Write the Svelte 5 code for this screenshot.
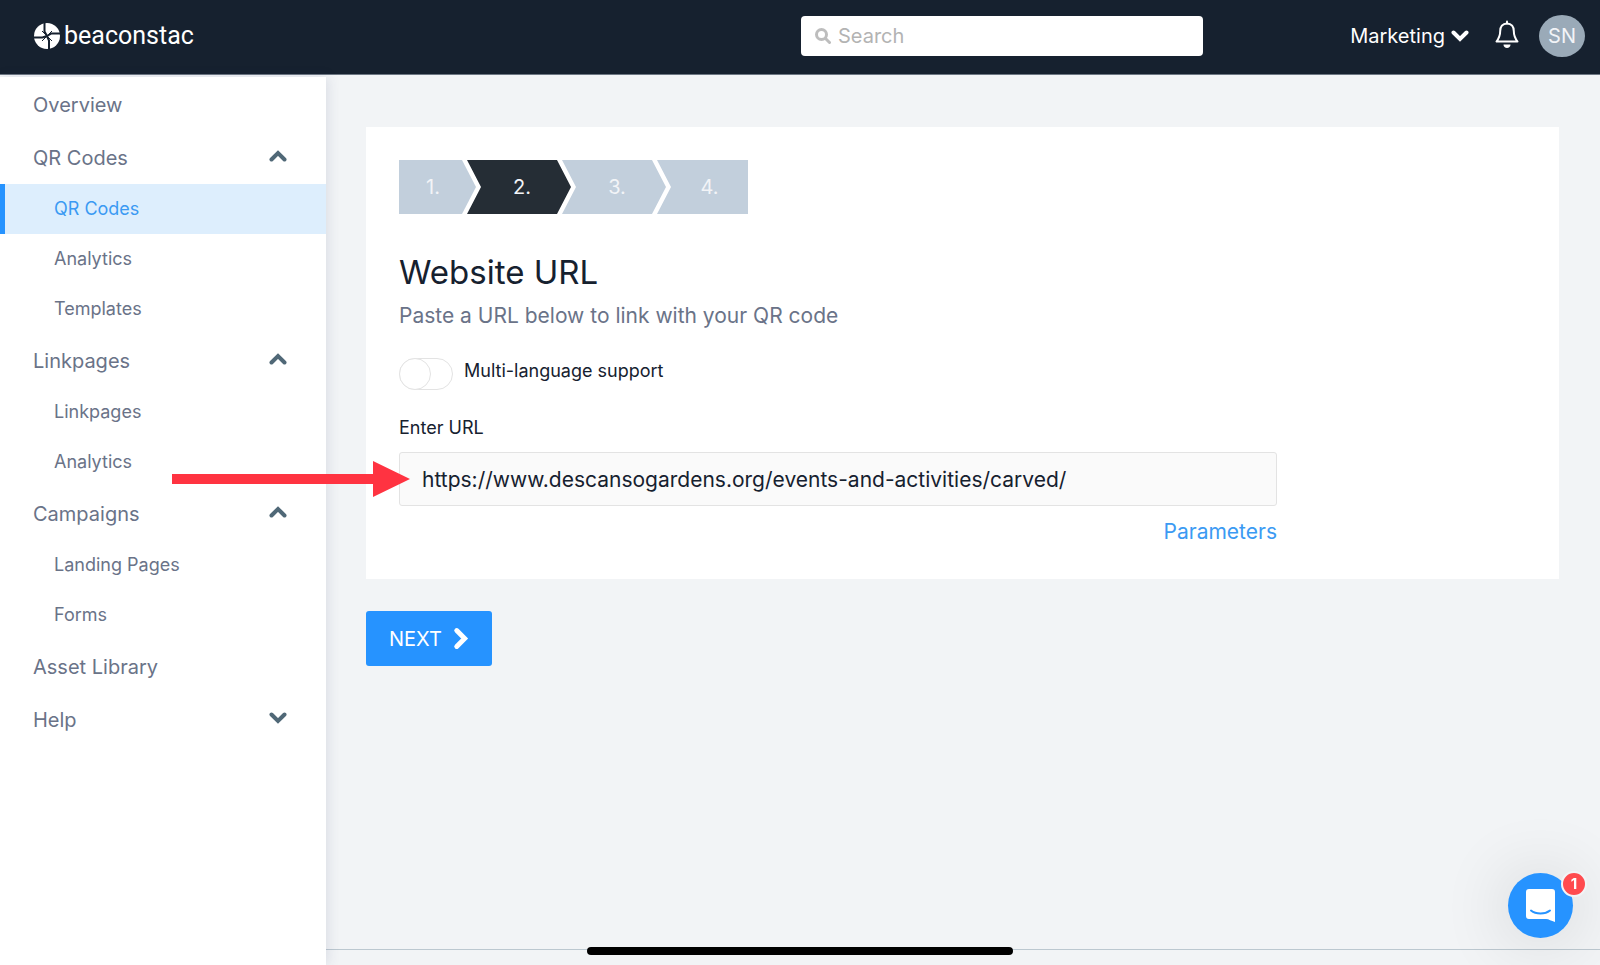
<script lang="ts">
  type Child = { label: string; active?: boolean };
  type Section = { label: string; expandable?: boolean; open?: boolean; children?: Child[] };

  let sections = $state<Section[]>([
    { label: 'Overview' },
    {
      label: 'QR Codes',
      expandable: true,
      open: true,
      children: [{ label: 'QR Codes', active: true }, { label: 'Analytics' }, { label: 'Templates' }]
    },
    { label: 'Linkpages', expandable: true, open: true, children: [{ label: 'Linkpages' }, { label: 'Analytics' }] },
    { label: 'Campaigns', expandable: true, open: true, children: [{ label: 'Landing Pages' }, { label: 'Forms' }] },
    { label: 'Asset Library' },
    { label: 'Help', expandable: true, open: false }
  ]);

  const steps = [1, 2, 3, 4];
  let currentStep = $state(2);
  let search = $state('');
  let multiLanguage = $state(false);
  let url = $state('https://www.descansogardens.org/events-and-activities/carved/');
  let unreadMessages = $state(1);

  function next() {
    currentStep = Math.min(currentStep + 1, steps.length);
  }
</script>

{#snippet chevron(direction: string)}
  <svg class="chevron {direction}" viewBox="0 0 18 12" aria-hidden="true">
    <path d="M2.500 2.500 9 9l6.500-6.500" />
  </svg>
{/snippet}

<div class="app">
  <header class="topbar">
    <a class="logo" href="#home" aria-label="beaconstac">
      <svg viewBox="0 0 26 26" aria-hidden="true">
        <circle cx="13" cy="13" r="13" />
        <path d="M13 13 10.500 8.500V0M13 13l4.500-2.500H26M13 13l2 4.500V26M13 13l-4.500 1.500H0" />
        <path class="thin" d="m8 8 10 10M18 8 8 18" />
      </svg>
      <span>beaconstac</span>
    </a>
    <div class="tools">
      <label class="search">
        <svg viewBox="0 0 16 16" aria-hidden="true">
          <circle cx="6.500" cy="6.500" r="5" />
          <path d="m10.500 10.500 4 4" />
        </svg>
        <input type="search" placeholder="Search" aria-label="Search" bind:value={search} />
      </label>
      <div class="account">
        <button class="workspace">Marketing {@render chevron('down')}</button>
        <button class="bell" aria-label="Notifications">
          <svg viewBox="0 0 24 28" aria-hidden="true">
            <path class="outline" d="M12 3.500c-4.600 0-6.800 3.400-6.800 7.500 0 5.500-1.400 7.500-3.700 10.500h21c-2.300-3-3.700-5-3.700-10.500 0-4.100-2.200-7.500-6.800-7.500Z" />
            <path class="outline" d="M12 1.500v2" />
            <path class="clapper" d="M8.500 24.500h7c0 2-1.500 3.500-3.500 3.500s-3.500-1.500-3.500-3.500Z" />
          </svg>
        </button>
        <button class="avatar" aria-label="Account">SN</button>
      </div>
    </div>
  </header>

  <nav class="sidebar" aria-label="Main">
    {#each sections as section (section.label)}
      {#if section.expandable}
        <button class="item" aria-expanded={section.open} onclick={() => (section.open = !section.open)}>
          {section.label}
          {@render chevron(section.open ? 'up' : 'down')}
        </button>
      {:else}
        <a class="item" href="#{section.label}">{section.label}</a>
      {/if}
      {#if section.open && section.children}
        {#each section.children as child (child.label)}
          <a class="child" class:active={child.active} href="#{section.label}/{child.label}">{child.label}</a>
        {/each}
      {/if}
    {/each}
  </nav>

  <main>
    <section class="card">
      <ol class="steps">
        {#each steps as step (step)}
          <li class:current={step === currentStep} aria-current={step === currentStep ? 'step' : undefined}>{step}.</li>
        {/each}
      </ol>
      <h1>Website URL</h1>
      <p class="lead">Paste a URL below to link with your QR code</p>
      <label class="toggle">
        <input type="checkbox" bind:checked={multiLanguage} />
        <span>Multi-language support</span>
      </label>
      <div class="field">
        <label for="url">Enter URL</label>
        <div class="control">
          <input id="url" type="text" spellcheck="false" bind:value={url} />
          <svg class="pointer" viewBox="0 0 238 36" aria-hidden="true">
            <path d="M0 13h201V0l37 18-37 18V23H0Z" />
          </svg>
        </div>
        <a href="#parameters">Parameters</a>
      </div>
    </section>
    <button class="next" onclick={next}>NEXT {@render chevron('right')}</button>
    <footer></footer>
  </main>

  <button class="chat" aria-label="Open chat" onclick={() => (unreadMessages = 0)}>
    <svg viewBox="0 0 29 33" aria-hidden="true">
      <path class="bubble" d="M3 0h23q3 0 3 3v30c-4-1-6-3-9-3H3q-3 0-3-3V3q0-3 3-3Z" />
      <path class="smile" d="M5 21.500c5 4 14 4 19 0" />
    </svg>
    {#if unreadMessages > 0}<span class="badge">{unreadMessages}</span>{/if}
  </button>
  <div class="home-indicator"></div>
</div>

<style>
  :global(body) { background: #f2f4f6; }
  .app { min-height: 100vh; display: grid; grid-template: 75px 1fr / 326px 1fr; font-family: Inter, "Liberation Sans", sans-serif; font-size: 20px; line-height: 24px; color: #16212f; }
  button, input { font: inherit; color: inherit; }
  button { border: 0; padding: 0; background: none; cursor: pointer; }
  a { color: inherit; text-decoration: none; }

  .chevron { width: 18px; height: 12px; fill: none; stroke: currentColor; stroke-width: 4; stroke-linecap: round; flex: none; }
  .chevron.up { transform: rotate(180deg); }
  .chevron.right { width: 22px; height: 15px; transform: rotate(-90deg); }

  .topbar { grid-column: 1 / -1; display: grid; grid-template-columns: 1fr 1fr; align-items: center; padding-bottom: 3px; background: #16212f; color: #fff; border-bottom: 1px solid #6d7783; box-sizing: border-box; }
  .logo { display: flex; align-items: center; gap: 4px; margin-left: 34px; font: 25px/32px Roboto, sans-serif; }
  .logo svg { width: 26px; height: 26px; fill: #fff; }
  .logo path { fill: none; stroke: #16212f; stroke-width: 2; }
  .logo .thin { stroke-width: 1; }
  .tools { display: flex; align-items: center; justify-content: space-between; padding: 0 15px 0 1px; }
  .search { display: flex; align-items: center; gap: 7px; width: 402px; height: 40px; padding: 0 14px; box-sizing: border-box; border-radius: 4px; background: #fff; color: #16212f; }
  .search svg { width: 16px; height: 16px; fill: none; stroke: #bdbdbd; stroke-width: 3; stroke-linecap: round; flex: none; }
  .search input { flex: 1; min-width: 0; padding: 0; border: 0; outline: 0; background: none; }
  .search input::placeholder { color: #b3b3b3; }
  .account { display: flex; align-items: center; }
  .workspace { display: flex; align-items: center; gap: 6px; }
  .bell { margin: 0 20px 4px 26px; height: 28px; }
  .bell svg { display: block; width: 24px; height: 28px; fill: none; }
  .bell .outline { stroke: #fff; stroke-width: 2; stroke-linecap: round; stroke-linejoin: round; }
  .bell .clapper { fill: #fff; }
  .avatar { width: 46px; height: 42px; border-radius: 50%; background: #9aaab8; color: #f2f4f7; }

  .sidebar { z-index: 1; display: flex; flex-direction: column; margin-top: 2px; padding-top: 1px; background: #fff; color: #6a7388; box-shadow: 2px 0 12px rgb(50 60 110 / .12); }
  .item { display: flex; align-items: center; justify-content: space-between; height: 53px; padding: 0 39px 0 33px; text-align: left; }
  .item .chevron { margin-bottom: 4px; color: #506877; }
  .child { display: flex; align-items: center; height: 50px; padding-left: 49px; border-left: 5px solid transparent; font-size: 18px; }
  .child.active { border-color: #2693ff; background: #ddeefd; color: #3b9af3; }

  main { display: flex; flex-direction: column; align-items: flex-start; min-width: 0; }
  .card { align-self: stretch; margin: 52px 41px 32px 40px; padding: 33px 33px 35px; background: #fff; }
  .steps { display: flex; margin: 0; padding: 0; list-style: none; color: #f2f4f7; }
  .steps li { display: grid; place-items: center; width: 104px; height: 54px; margin-left: -9px; padding-left: 6px; box-sizing: border-box; background: #c2cfdc; clip-path: polygon(0 0, calc(100% - 14px) 0, 100% 50%, calc(100% - 14px) 100%, 0 100%, 14px 50%); }
  .steps li:first-child { width: 77px; margin-left: 0; padding: 0 9px 0 0; clip-path: polygon(0 0, calc(100% - 14px) 0, 100% 50%, calc(100% - 14px) 100%, 0 100%); }
  .steps li:last-child { width: 91px; padding-left: 14px; clip-path: polygon(0 0, 100% 0, 100% 100%, 0 100%, 14px 50%); }
  .steps .current { background: #252d35; }
  h1 { margin: 38px 0 0; font-size: 33px; line-height: 40px; font-weight: 400; }
  .lead { margin: 12px 0 0; font-size: 21px; color: #6a7388; }
  .toggle { display: flex; align-items: flex-start; gap: 11px; margin-top: 30px; width: fit-content; font-size: 18px; }
  .toggle input { appearance: none; width: 54px; height: 32px; margin: 0; border: 1px solid #e3e3e3; border-radius: 16px; cursor: pointer; }
  .toggle input::before { content: ''; display: block; box-sizing: border-box; width: 32px; height: 32px; margin: -1px; border: 1px solid #e3e3e3; border-radius: 50%; background: #fff; }
  .toggle input:checked { background: #2693ff; }
  .toggle input:checked::before { margin-left: 21px; }
  .toggle span { padding-top: 1px; }
  .field { display: flex; flex-direction: column; max-width: 878px; margin-top: 26px; }
  .field label { font-size: 18px; }
  .control { position: relative; margin: 12px 0 14px; font-size: 21px; }
  .control input { width: 100%; height: 54px; padding: 0 22px; box-sizing: border-box; border: 1px solid #e3e3e3; border-radius: 3px; outline: 0; background: #fafafa; }
  .pointer { position: absolute; z-index: 2; left: -227px; top: 9px; width: 238px; height: 36px; fill: #ff3341; pointer-events: none; }
  .field a { align-self: flex-end; font-size: 21px; color: #3b9af3; }
  .next { display: flex; align-items: center; gap: 8px; height: 55px; margin-left: 40px; padding: 0 20px 0 23px; border-radius: 3px; background: #2693ff; color: #fff; }
  footer { align-self: stretch; height: 15px; margin-top: auto; border-top: 1px solid #bcc8d0; }

  .chat { position: fixed; right: 27px; bottom: 27px; width: 65px; height: 65px; display: grid; place-items: center; border-radius: 50%; background: #2693ff; box-shadow: 0 2px 70px rgb(0 0 0 / .16); }
  .chat svg { width: 29px; height: 33px; }
  .bubble { fill: #fff; }
  .smile { fill: none; stroke: #2693ff; stroke-width: 2; stroke-linecap: round; }
  .badge { position: absolute; top: -2px; right: -14px; width: 22px; border: 2px solid #f2f4f6; border-radius: 50%; background: #ff4b4f; color: #fff; font-size: 15px; line-height: 22px; font-weight: 700; }
  .home-indicator { position: fixed; left: 50%; bottom: 10px; width: 426px; height: 8px; margin-left: -213px; border-radius: 4px; background: #000; z-index: 2; }
</style>
